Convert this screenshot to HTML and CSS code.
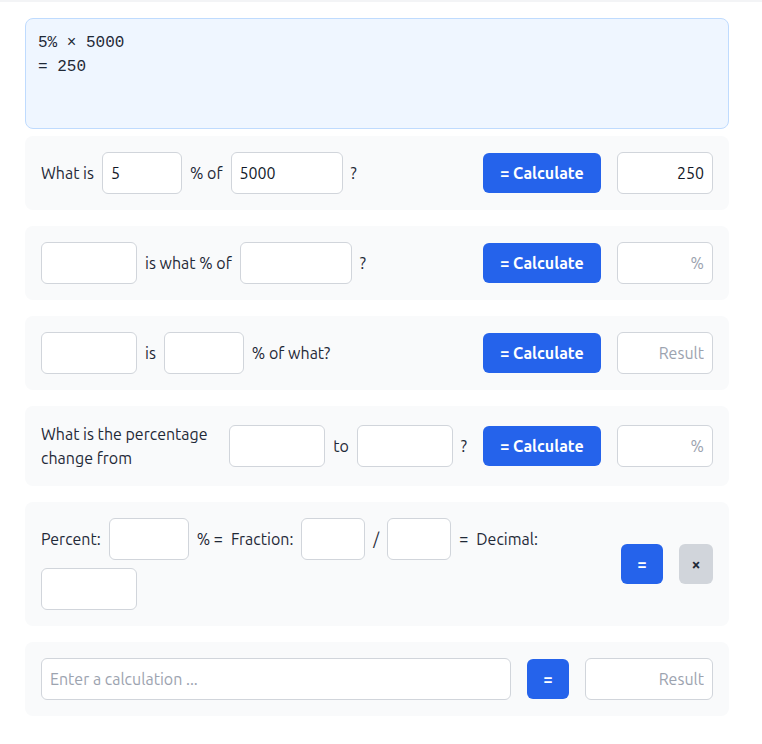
FILE: index.html
```html
<!DOCTYPE html>
<html lang="en">
<head>
    <meta charset="UTF-8">
    <meta name="viewport" content="width=device-width, initial-scale=1.0">
    <title>Percentage Calculator</title>
    <link rel="stylesheet" href="styles.css">
</head>
<body>

<div class="topbar"></div>

<div class="container">
    <!-- output of the last calculation -->
    <div class="output">5% × 5000<br>= 250</div>

    <!-- what is x % of y -->
    <div class="calc-row">
        <div class="fields">
            <span>What is</span>
            <input type="text" class="num small" value="5">
            <span>% of</span>
            <input type="text" class="num wide" value="5000">
            <span>?</span>
        </div>
        <div class="actions">
            <button class="btn-calc">= Calculate</button>
            <input type="text" class="result" value="250">
        </div>
    </div>

    <!-- x is what % of y -->
    <div class="calc-row">
        <div class="fields">
            <input type="text" class="num">
            <span>is what % of</span>
            <input type="text" class="num wide">
            <span>?</span>
        </div>
        <div class="actions">
            <button class="btn-calc">= Calculate</button>
            <input type="text" class="result" placeholder="%">
        </div>
    </div>

    <!-- x is y % of what -->
    <div class="calc-row">
        <div class="fields">
            <input type="text" class="num">
            <span>is</span>
            <input type="text" class="num small">
            <span>% of what?</span>
        </div>
        <div class="actions">
            <button class="btn-calc">= Calculate</button>
            <input type="text" class="result" placeholder="Result">
        </div>
    </div>

    <!-- percentage change -->
    <div class="calc-row">
        <div class="fields">
            <span class="long-label">What is the percentage change from</span>
            <input type="text" class="num">
            <span>to</span>
            <input type="text" class="num">
            <span>?</span>
        </div>
        <div class="actions">
            <button class="btn-calc">= Calculate</button>
            <input type="text" class="result" placeholder="%">
        </div>
    </div>

    <!-- percent / fraction / decimal -->
    <div class="calc-row">
        <div class="fields wrap">
            <span>Percent:</span>
            <input type="text" class="num small">
            <span>% =</span>
            <span>Fraction:</span>
            <input type="text" class="num tiny">
            <span>/</span>
            <input type="text" class="num tiny">
            <span>=</span>
            <span>Decimal:</span>
            <input type="text" class="num">
        </div>
        <div class="actions">
            <button class="btn-eq">=</button>
            <button class="btn-clear">×</button>
        </div>
    </div>

    <!-- free calculation -->
    <div class="calc-row">
        <input type="text" class="expr" placeholder="Enter a calculation ...">
        <button class="btn-eq">=</button>
        <input type="text" class="result wide-result" placeholder="Result">
    </div>
</div>

</body>
</html>
```

FILE: styles.css
```css
body {
    font-family: "Ubuntu", "Lato", "Noto Sans", sans-serif;
    font-size: 16px;
    color: #1f2937;
    background-color: #fff;
    margin: 0;
    padding: 0;
}

.topbar {
    height: 2px;
    background-color: #f3f4f6;
}

.container {
    padding: 16px 33px 16px 25px;
}

.output {
    box-sizing: border-box;
    height: 111px;
    padding: 12px;
    margin-bottom: 7px;
    font-family: "Liberation Mono", monospace;
    font-size: 16px;
    line-height: 24px;
    color: #1f2937;
    background-color: #eff6ff;
    border: 1px solid #bfdbfe;
    border-radius: 8px;
}

.calc-row {
    display: flex;
    align-items: center;
    gap: 16px;
    padding: 16px;
    margin-bottom: 16px;
    background-color: #f9fafb;
    border-radius: 8px;
    line-height: 24px;
}

.fields {
    flex: 1;
    min-width: 0;
    display: flex;
    align-items: center;
    gap: 8px;
}

.fields.wrap {
    flex-wrap: wrap;
}

.fields span {
    white-space: nowrap;
}

.fields .long-label {
    white-space: normal;
    min-width: 0;
}

.actions {
    display: flex;
    align-items: center;
    gap: 16px;
}

input[type="text"] {
    box-sizing: border-box;
    height: 42px;
    padding: 0 8px;
    font-family: inherit;
    font-size: 16px;
    color: #111827;
    background-color: #fff;
    border: 1px solid #d1d5db;
    border-radius: 6px;
    outline: none;
    flex-shrink: 0;
}

input::placeholder {
    color: #9ca3af;
}

.num {
    width: 96px;
}

.num.small {
    width: 80px;
}

.num.wide {
    width: 112px;
}

.num.tiny {
    width: 64px;
}

.result {
    width: 96px;
    text-align: right;
}

.result.wide-result {
    width: 128px;
}

input.expr {
    flex: 1;
    min-width: 0;
}

button {
    height: 40px;
    border: none;
    border-radius: 6px;
    font-family: inherit;
    font-size: 16px;
    font-weight: bold;
    cursor: pointer;
}

.btn-calc {
    width: 118px;
    color: #fff;
    background-color: #2563eb;
}

.btn-eq {
    width: 42px;
    color: #fff;
    background-color: #2563eb;
}

.btn-clear {
    width: 34px;
    color: #1f2937;
    background-color: #d1d5db;
    font-size: 16px;
}

button:hover {
    opacity: 0.9;
}
```
